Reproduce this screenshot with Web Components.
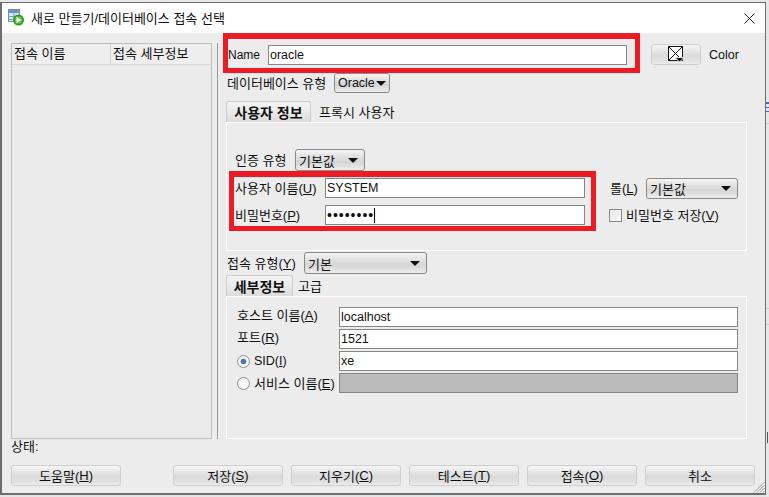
<!DOCTYPE html>
<html lang="ko">
<head>
<meta charset="utf-8">
<title>새로 만들기/데이터베이스 접속 선택</title>
<style>
html,body{margin:0;padding:0;width:769px;height:497px;overflow:hidden;}
body{font:13px "Liberation Sans","Noto Sans CJK KR",sans-serif;color:#111;
  background:
    linear-gradient(#3f6fb5,#3f6fb5) 766px 102px/3px 2px no-repeat,
    linear-gradient(#3f6fb5,#3f6fb5) 766px 107px/3px 1px no-repeat,
    linear-gradient(#3f6fb5,#3f6fb5) 766px 111px/3px 1px no-repeat,
    linear-gradient(#cfcfcf,#cfcfcf) 766px 123px/3px 1px no-repeat,
    linear-gradient(#cfcfcf,#cfcfcf) 766px 308px/3px 1px no-repeat,
    linear-gradient(#cfcfcf,#cfcfcf) 766px 324px/3px 1px no-repeat,
    linear-gradient(#555,#555) 767px 432px/1px 11px no-repeat,
    #e6e6e6;}
u{text-decoration:underline;text-underline-offset:1px;}
</style>
</head>
<body>
<db-dialog></db-dialog>
<template id="dialog-t">
<style>
:host{display:flex;flex-direction:column;box-sizing:border-box;position:relative;width:766px;height:493px;margin-top:2px;
  background:#ececec;border:1px solid #6e6e6e;border-left-width:2px;border-bottom-width:2px;}
.main{display:flex;height:396px;margin-top:10px;padding-left:9px;}
.split{width:1px;background:#9b9b9b;margin:0 8px 0 5px;}
.right{width:521px;padding-top:1px;display:flex;flex-direction:column;}
.row{display:flex;align-items:center;}
.latin{font-size:12.5px;}
.name{height:21px;}
.name .lbl{width:42px;padding-left:2px;box-sizing:border-box;font-size:12px;}
.name .lbl+db-field{width:359px;}
.colorbtn{margin-left:24px;width:50px;height:21px;}
.colorlbl{margin-left:8px;font-size:12.5px;}
.dbtype{margin-top:8px;height:20px;}
.dbtype .lbl{width:108px;padding:0 0 1px 1px;box-sizing:border-box;}
.tabs1{margin-top:8px;}
.auth{height:22px;}
.auth .lbl{width:60px;padding-bottom:1px;}
.user{display:grid;grid-template-columns:90px 260px 25px 36px 92px;grid-template-rows:20px 20px;row-gap:7px;align-items:center;margin-top:7px;}
.user>span{padding-bottom:2px;}
.user .check{grid-column:3 / span 3;padding:0 0 0 24px;}
.ctype{height:22px;margin-top:1px;}
.ctype .lbl{width:78px;padding:0 0 1px 1px;box-sizing:border-box;}
.tabs2{margin-top:1px;flex:1;display:flex;flex-direction:column;}
.conn{display:grid;grid-template-columns:102px 399px;grid-auto-rows:20px;row-gap:2px;align-items:center;}
.conn .up{padding-bottom:5px;}
.status{height:15px;line-height:15px;margin:0 0 1px 9px;}
.btns{display:flex;margin:10px 0 0 9px;gap:8px;}
.btns .help{margin-right:44px;}
.grip{position:absolute;right:0;bottom:0;width:12px;height:12px;}
</style>
<db-titlebar>새로 만들기/데이터베이스 접속 선택</db-titlebar>
<div class="main">
  <db-conn-list></db-conn-list>
  <div class="split"></div>
  <div class="right">
    <div class="row name">
      <span class="lbl">Name</span><db-field>oracle</db-field>
      <db-button class="colorbtn" aria-label="색상">
        <svg width="24" height="18" viewBox="0 0 24 18"><path d="M4.500 1.500h14v14h-14z" fill="#fff" stroke="#111"/><path d="M4.500 1.500l14 14M18.500 1.500l-14 14" stroke="#111" fill="none"/><path d="M11 12.500h9l-4.500 4.500z" fill="#111" stroke="#e4e4e4"/></svg>
      </db-button>
      <span class="colorlbl">Color</span>
    </div>
    <div class="row dbtype"><span class="lbl">데이터베이스 유형</span><db-combo class="latin" style="width:56px;height:20px;font-size:12.5px" compact>Oracle</db-combo></div>
    <db-tabs class="tabs1" panel-height="129" tab-width="85" other-pad="8">
      <span slot="active">사용자 정보</span>
      <span slot="other">프록시 사용자</span>
      <div style="padding:26px 0 0 8px">
        <div class="row auth"><span class="lbl">인증 유형</span><db-combo style="width:70px;height:22px">기본값</db-combo></div>
        <div class="user">
          <span>사용자 이름(<u>U</u>)</span><db-field>SYSTEM</db-field><span></span>
          <span>롤(<u>L</u>)</span><db-combo style="height:21px">기본값</db-combo>
          <span>비밀번호(<u>P</u>)</span><db-field caret>••••••••</db-field>
          <db-check class="check">비밀번호 저장(<u>V</u>)</db-check>
        </div>
      </div>
    </db-tabs>
    <div class="row ctype"><span class="lbl">접속 유형(<u>Y</u>)</span><db-combo style="width:123px;height:22px">기본</db-combo></div>
    <db-tabs class="tabs2" tab-width="67" other-pad="5">
      <span slot="active">세부정보</span>
      <span slot="other">고급</span>
      <div class="conn" style="padding:10px 0 0 10px">
        <span class="up">호스트 이름(<u>A</u>)</span><db-field>localhost</db-field>
        <span class="up">포트(<u>R</u>)</span><db-field>1521</db-field>
        <db-radio checked><span class="latin">SID(<u>I</u>)</span></db-radio><db-field>xe</db-field>
        <db-radio>서비스 이름(<u>E</u>)</db-radio><db-field disabled></db-field>
      </div>
    </db-tabs>
  </div>
</div>
<div class="status">상태:</div>
<div class="btns">
  <db-button class="help" style="width:110px;height:21px">도움말(<u>H</u>)</db-button>
  <db-button style="width:110px;height:21px">저장(<u>S</u>)</db-button>
  <db-button style="width:110px;height:21px">지우기(<u>C</u>)</db-button>
  <db-button style="width:110px;height:21px">테스트(<u>T</u>)</db-button>
  <db-button style="width:110px;height:21px">접속(<u>O</u>)</db-button>
  <db-button style="width:110px;height:21px">취소</db-button>
</div>
<svg class="grip" viewBox="0 0 12 12"><path d="M11.500 1L1 11.500M11.500 4L4 11.500M11.500 7L7 11.500M11.500 10L10 11.500" stroke="#9a9a9a" fill="none"/><path d="M11.500 2.500L2.500 11.500M11.500 5.500L5.500 11.500M11.500 8.500L8.500 11.500" stroke="#fff" fill="none"/></svg>
<db-mark style="left:221px;top:30px;width:417px;height:40px"></db-mark>
<db-mark style="left:227px;top:168px;width:367px;height:60px"></db-mark>
</template>
<script>
const S=(css,html)=>`<style>${css}</style>${html}`;
function def(name,render){
  customElements.define(name,class extends HTMLElement{
    constructor(){super();this.attachShadow({mode:'open'}).innerHTML=render(this);}
  });
}
customElements.define('db-dialog',class extends HTMLElement{
  constructor(){super();this.attachShadow({mode:'open'}).appendChild(document.getElementById('dialog-t').content.cloneNode(true));}
});
def('db-titlebar',()=>S(`
  :host{display:flex;align-items:center;height:30px;flex:none;background:#fff;padding-left:6px;}
  svg.ic{flex:none;margin:0 7px 1px 0}
  .t{flex:1;padding-bottom:2px}
  svg.x{flex:none;margin-right:10px}
`,`<svg class="ic" width="16" height="17" viewBox="0 0 16 17">
  <rect x=".5" y=".5" width="11" height="12" fill="#dbe6f4" stroke="#6f8fb8"/>
  <rect x="1" y="1" width="10" height="3" fill="#6f93c4"/>
  <path d="M1 7.500h10M1 10.500h10M6 4v8" stroke="#7d9cc4" fill="none"/>
  <circle cx="10.500" cy="11" r="5.500" fill="#2e9e1f"/>
  <circle cx="10.500" cy="11" r="3.800" fill="#5cc23c"/>
  <path d="M8.500 7.800l5 3.200-5 3.200z" fill="#fff"/>
</svg><span class="t"><slot></slot></span>
<svg class="x" width="11" height="11" viewBox="0 0 11 11"><path d="M.5.500l10 10M10.500.500l-10 10" stroke="#222" fill="none"/></svg>`));
def('db-conn-list',()=>S(`
  :host{display:flex;flex-direction:column;box-sizing:border-box;width:201px;height:396px;border:1px solid #bdbdbd;background:#ebebeb;}
  .h{display:flex;height:20px;line-height:20px;border-bottom:1px solid #d8d8d8;background:#eeeeee;}
  .h span{padding-left:2px;box-sizing:border-box}
  .a{width:99px;border-right:1px solid #d4d4d4}
`,`<div class="h"><span class="a">접속 이름</span><span>접속 세부정보</span></div>`));
def('db-field',(e)=>{
  const dis=e.hasAttribute('disabled'),car=e.hasAttribute('caret');
  return S(`
  :host{display:block;box-sizing:border-box;height:20px;line-height:18px;border:1px solid #868686;background:${dis?'#bababa':'#fff'};padding-left:1px;white-space:nowrap;overflow:hidden;font-size:${car?14:12.5}px;${car?'letter-spacing:1px;':''}}
  .c{display:inline-block;width:1px;height:15px;background:#000;vertical-align:-3px}
`,`<slot></slot>${car?'<span class="c"></span>':''}`);
});
def('db-combo',(e)=>{
  const c=e.hasAttribute('compact');
  return S(`
  :host{display:flex;align-items:center;box-sizing:border-box;border:1px solid #8a8a8a;border-radius:3px;padding:0 ${c?3:6}px 0 3px;
    background:linear-gradient(#f7f7f7,#e6e6e6 25%,#d6d6d6 60%,#ececec);}
  .t{flex:1;white-space:nowrap}
  .a{flex:none;width:0;height:0;border:5px solid transparent;border-top:5px solid #111;border-bottom:0;}
`,`<span class="t"><slot></slot></span><span class="a"></span>`);
});
def('db-button',()=>S(`
  :host{display:flex;align-items:center;justify-content:center;box-sizing:border-box;border:1px solid #cfcfcf;border-radius:3px;padding-bottom:1px;
    background:linear-gradient(#f6f6f6,#ececec 20%,#dadada 55%,#e2e2e2 85%,#ededed);}
`,`<slot></slot>`));
def('db-tabs',(e)=>{
  const w=e.getAttribute('tab-width'),h=e.getAttribute('panel-height'),o=e.getAttribute('other-pad');
  return S(`
  :host{display:flex;flex-direction:column;}
  .strip{display:flex;height:21px;align-items:stretch;flex:none}
  .on{box-sizing:border-box;width:${w}px;border:1px solid #cdcdcd;border-bottom:0;border-radius:3px 3px 0 0;background:linear-gradient(#f4f4f4,#ececec 40%,#dcdcdc);padding-bottom:1px;
    display:flex;align-items:center;justify-content:center;font-weight:bold;font-size:14px}
  .off{padding-left:${o}px;display:flex;align-items:center}
  .p{box-sizing:border-box;border:1px solid #fff;${h?`height:${h}px`:'flex:1'}}
`,`<div class="strip"><div class="on"><slot name="active"></slot></div><div class="off"><slot name="other"></slot></div></div><div class="p"><slot></slot></div>`);
});
def('db-check',()=>S(`
  :host{display:flex;align-items:center;gap:4px;white-space:nowrap}
  i{flex:none;box-sizing:border-box;width:13px;height:13px;border:1px solid #8a8a8a;background:linear-gradient(135deg,#e6e6e6,#fbfbfb)}
  span{padding-bottom:2px}
`,`<i></i><span><slot></slot></span>`));
def('db-radio',(e)=>{
  const on=e.hasAttribute('checked');
  return S(`
  :host{display:flex;align-items:center;gap:4px;white-space:nowrap}
  svg{flex:none}
  span{padding-bottom:2px}
`,`<svg width="13" height="13" viewBox="0 0 13 13"><circle cx="6.500" cy="6.500" r="6" fill="#f6f6f6" stroke="#8f8f8f"/>${on?'<circle cx="6.500" cy="6.500" r="2.800" fill="#4a76c0"/>':''}</svg><span><slot></slot></span>`);
});
def('db-mark',()=>S(`
  :host{position:absolute;box-sizing:border-box;border:5px solid #ed1c24;border-top-width:6px;pointer-events:none}
`,``));
</script>
</body>
</html>
